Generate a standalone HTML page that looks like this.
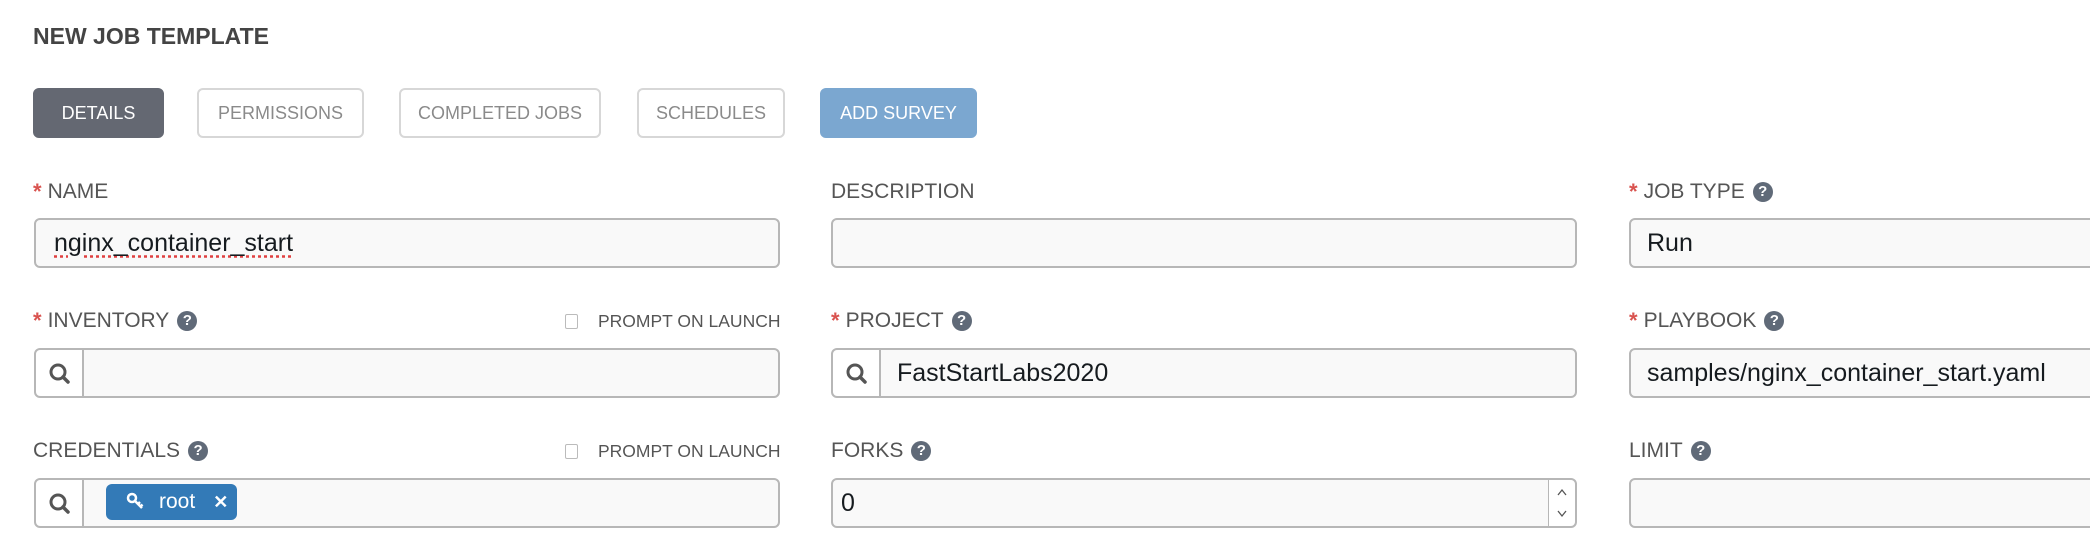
<!DOCTYPE html>
<html><head><meta charset="utf-8"><style>
*{box-sizing:border-box;margin:0;padding:0}
body{width:2090px;height:552px;background:#fff;font-family:"Liberation Sans",sans-serif;position:relative;overflow:hidden;color:#606060}
.a{position:absolute}
.title{left:33px;top:23px;font-size:23px;font-weight:bold;color:#444}
.btn{position:absolute;top:88px;height:50px;border:2px solid #d7d7d7;border-radius:6px;font-size:18px;color:#8a8a8a;display:flex;align-items:center;justify-content:center;background:#fff}
.lbl{position:absolute;font-size:21px;color:#555;display:flex;align-items:center;height:26px}
.star{color:#d9534f;font-weight:bold;margin-right:6px;font-size:22px}
.q{display:inline-block;width:20px;height:20px;border-radius:50%;background:#606a78;color:#fff;font-size:15px;font-weight:bold;text-align:center;line-height:20px;margin-left:8px}
.inp{position:absolute;height:50px;border:2px solid #b7b7b7;border-radius:6px;background:#f9f9f9;font-size:25px;color:#161b1f;display:flex;align-items:center;padding-left:16px}
.srch{position:absolute;left:0;top:0;bottom:0;width:48px;border-right:2px solid #b7b7b7;background:#fff;border-radius:5px 0 0 5px}
.pol{position:absolute;font-size:17.5px;color:#555;display:flex;align-items:center}
.cb{width:13px;height:15px;border:1px solid #bbb;border-radius:2px;margin-right:20px}
</style></head><body>
<div class="a title">NEW JOB TEMPLATE</div>
<div class="btn" style="left:33px;width:131px;background:#646872;border-color:#646872;color:#fff">DETAILS</div>
<div class="btn" style="left:197px;width:167px">PERMISSIONS</div>
<div class="btn" style="left:399px;width:202px">COMPLETED JOBS</div>
<div class="btn" style="left:637px;width:148px">SCHEDULES</div>
<div class="btn" style="left:820px;width:157px;background:#7ba7d0;border-color:#7ba7d0;color:#fff">ADD SURVEY</div>

<div class="lbl" style="left:33px;top:179px"><span class="star">*</span>NAME</div>
<div class="lbl" style="left:831px;top:179px">DESCRIPTION</div>
<div class="lbl" style="left:1629px;top:179px"><span class="star">*</span>JOB TYPE<span class="q">?</span></div>
<div class="inp" style="left:34px;top:218px;width:746px;padding-left:18px"><span style="text-decoration:underline dotted #e04040;text-underline-offset:5px">nginx_container_start</span></div>
<div class="inp" style="left:831px;top:218px;width:746px"></div>
<div class="inp" style="left:1629px;top:218px;width:500px">Run</div>

<div class="lbl" style="left:33px;top:308px"><span class="star">*</span>INVENTORY<span class="q">?</span></div>
<div class="pol" style="left:565px;top:311px"><span class="cb"></span>PROMPT ON LAUNCH</div>
<div class="lbl" style="left:831px;top:308px"><span class="star">*</span>PROJECT<span class="q">?</span></div>
<div class="lbl" style="left:1629px;top:308px"><span class="star">*</span>PLAYBOOK<span class="q">?</span></div>
<div class="inp" style="left:34px;top:348px;width:746px"><div class="srch"><svg width="46" height="46" viewBox="0 0 46 46"><circle cx="22" cy="22" r="7" fill="none" stroke="#555" stroke-width="3"/><path d="M27 27l5 5" stroke="#555" stroke-width="3.5" stroke-linecap="round"/></svg></div></div>
<div class="inp" style="left:831px;top:348px;width:746px;padding-left:64px"><div class="srch"><svg width="46" height="46" viewBox="0 0 46 46"><circle cx="22" cy="22" r="7" fill="none" stroke="#555" stroke-width="3"/><path d="M27 27l5 5" stroke="#555" stroke-width="3.5" stroke-linecap="round"/></svg></div>FastStartLabs2020</div>
<div class="inp" style="left:1629px;top:348px;width:500px">samples/nginx_container_start.yaml</div>

<div class="lbl" style="left:33px;top:438px">CREDENTIALS<span class="q">?</span></div>
<div class="pol" style="left:565px;top:441px"><span class="cb"></span>PROMPT ON LAUNCH</div>
<div class="lbl" style="left:831px;top:438px">FORKS<span class="q">?</span></div>
<div class="lbl" style="left:1629px;top:438px">LIMIT<span class="q">?</span></div>
<div class="inp" style="left:34px;top:478px;width:746px"><div class="srch"><svg width="46" height="46" viewBox="0 0 46 46"><circle cx="22" cy="22" r="7" fill="none" stroke="#555" stroke-width="3"/><path d="M27 27l5 5" stroke="#555" stroke-width="3.5" stroke-linecap="round"/></svg></div>
<div class="a" style="left:70px;top:4px;width:131px;height:36px;background:#337ab7;border-radius:6px;color:#fff;font-size:21px;display:flex;align-items:center;padding-left:20px"><svg width="20" height="20" viewBox="0 0 20 20"><circle cx="6" cy="6" r="4" fill="none" stroke="#fff" stroke-width="2.5"/><path d="M9 9l7 7M12 12l2-2M14.5 14.5l2-2" stroke="#fff" stroke-width="2.5"/></svg><span style="margin-left:13px">root</span><span style="margin-left:18px;font-weight:bold;font-size:18px">✕</span></div></div>
<div class="inp" style="left:831px;top:478px;width:746px;padding-left:8px">0<div class="a" style="right:0;top:0;bottom:0;width:27px;border-left:1px solid #b7b7b7;background:#fff;border-radius:0 5px 5px 0"><svg width="26" height="46" viewBox="0 0 26 46"><path d="M9 15l4-5 4 5M9 31l4 5 4-5" fill="none" stroke="#555" stroke-width="1.3"/></svg></div></div>
<div class="inp" style="left:1629px;top:478px;width:500px"></div>
</body></html>
